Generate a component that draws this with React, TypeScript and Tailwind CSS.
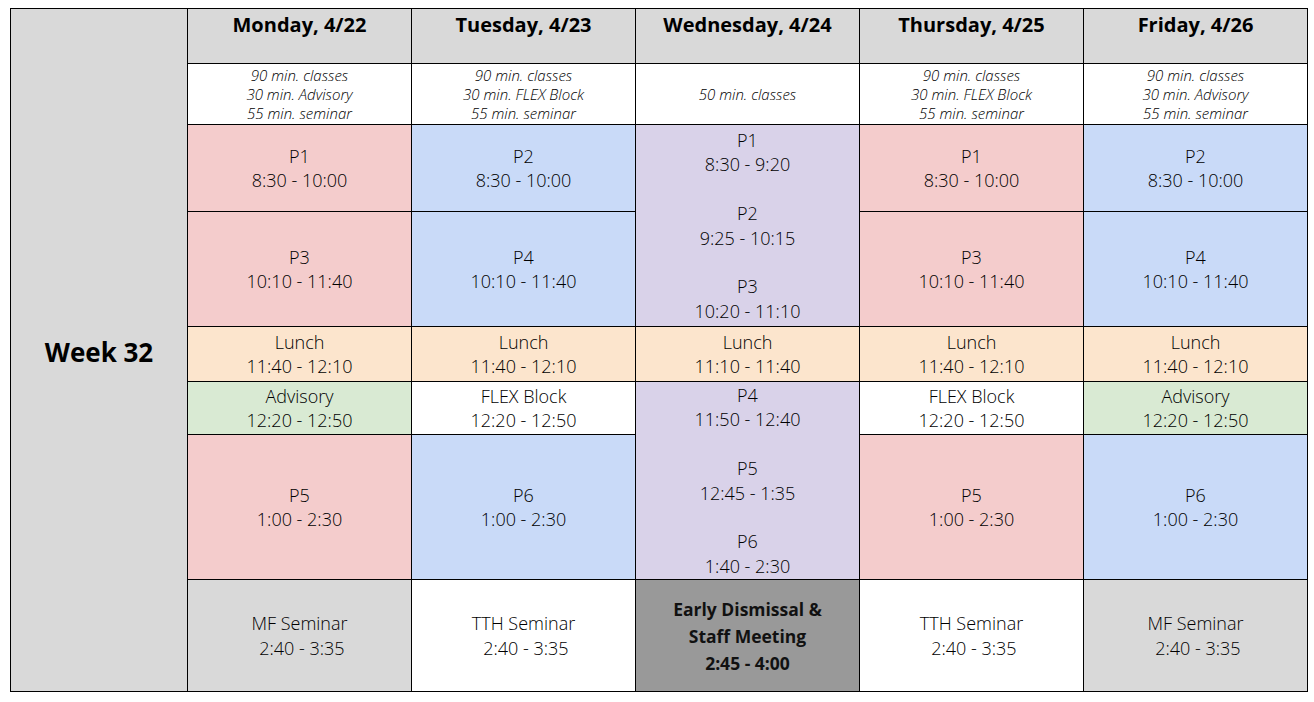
import React from 'react';

type Cell = {
  lines: string[];
  bg: string;
  span?: boolean;
  bold?: boolean;
};

const days = ['Monday, 4/22', 'Tuesday, 4/23', 'Wednesday, 4/24', 'Thursday, 4/25', 'Friday, 4/26'];

const notes: string[][] = [
  ['90 min. classes', '30 min. Advisory', '55 min. seminar'],
  ['90 min. classes', '30 min. FLEX Block', '55 min. seminar'],
  ['50 min. classes'],
  ['90 min. classes', '30 min. FLEX Block', '55 min. seminar'],
  ['90 min. classes', '30 min. Advisory', '55 min. seminar'],
];

const pink = 'bg-[#f4cccc]';
const blue = 'bg-[#c9daf8]';
const purple = 'bg-[#d9d2e9]';
const lunch = 'bg-[#fce5cd]';
const green = 'bg-[#d9ead3]';
const white = 'bg-white';
const gray = 'bg-[#d9d9d9]';

// rows after the notes line; wednesday's merged cells only show up once
const rows: Cell[][] = [
  [
    { lines: ['P1', '8:30 - 10:00'], bg: pink },
    { lines: ['P2', '8:30 - 10:00'], bg: blue },
    { lines: ['P1', '8:30 - 9:20', '', 'P2', '9:25 - 10:15', '', 'P3', '10:20 - 11:10'], bg: purple, span: true },
    { lines: ['P1', '8:30 - 10:00'], bg: pink },
    { lines: ['P2', '8:30 - 10:00'], bg: blue },
  ],
  [
    { lines: ['P3', '10:10 - 11:40'], bg: pink },
    { lines: ['P4', '10:10 - 11:40'], bg: blue },
    { lines: ['P3', '10:10 - 11:40'], bg: pink },
    { lines: ['P4', '10:10 - 11:40'], bg: blue },
  ],
  [
    { lines: ['Lunch', '11:40 - 12:10'], bg: lunch },
    { lines: ['Lunch', '11:40 - 12:10'], bg: lunch },
    { lines: ['Lunch', '11:10 - 11:40'], bg: lunch },
    { lines: ['Lunch', '11:40 - 12:10'], bg: lunch },
    { lines: ['Lunch', '11:40 - 12:10'], bg: lunch },
  ],
  [
    { lines: ['Advisory', '12:20 - 12:50'], bg: green },
    { lines: ['FLEX Block', '12:20 - 12:50'], bg: white },
    { lines: ['P4', '11:50 - 12:40', '', 'P5', '12:45 - 1:35', '', 'P6', '1:40 - 2:30'], bg: purple, span: true },
    { lines: ['FLEX Block', '12:20 - 12:50'], bg: white },
    { lines: ['Advisory', '12:20 - 12:50'], bg: green },
  ],
  [
    { lines: ['P5', '1:00 - 2:30'], bg: pink },
    { lines: ['P6', '1:00 - 2:30'], bg: blue },
    { lines: ['P5', '1:00 - 2:30'], bg: pink },
    { lines: ['P6', '1:00 - 2:30'], bg: blue },
  ],
  [
    { lines: ['MF Seminar', ' 2:40 - 3:35'], bg: gray },
    { lines: ['TTH Seminar', ' 2:40 - 3:35'], bg: white },
    { lines: ['Early Dismissal &', 'Staff Meeting', '2:45 - 4:00'], bg: 'bg-[#999999]', bold: true },
    { lines: ['TTH Seminar', ' 2:40 - 3:35'], bg: white },
    { lines: ['MF Seminar', ' 2:40 - 3:35'], bg: gray },
  ],
];

function ScheduleCell({ cell }: { cell: Cell }) {
  return (
    <div
      className={`${cell.bg} ${cell.span ? 'row-span-2' : ''} flex flex-col items-center justify-center text-center ${
        cell.bold
          ? 'font-bold text-[17.5px] leading-[27px] text-[#111] pt-[1px]'
          : 'font-light text-[18px] leading-[24.4px] text-black'
      }`}
    >
      {cell.lines.map((l, i) => (
        <div key={i} className="whitespace-pre">
          {l === '' ? '\u00a0' : l}
        </div>
      ))}
    </div>
  );
}

export default function App() {
  return (
    <div className="w-[1314px] h-[702px] bg-white pt-[8px] pl-[10px]" style={{ fontFamily: '"Open Sans", "Noto Sans", sans-serif' }}>
      <div className="inline-grid gap-px bg-black p-px grid-cols-[176px_223px_223px_223px_223px_223px] grid-rows-[54px_60px_86px_114px_54px_52px_144px_111px]">
        {/* week label */}
        <div className="row-span-8 bg-[#d9d9d9] flex items-center justify-center pt-[4px] text-[26px] font-bold text-black">
          Week 32
        </div>

        {days.map(d => (
          <div key={d} className="bg-[#d9d9d9] flex justify-center pt-[1px] text-[20px] font-bold text-black">
            {d}
          </div>
        ))}

        {notes.map((n, i) => (
          <div key={i} className="bg-white flex flex-col items-center justify-center text-[15px] leading-[19px] font-light italic text-black">
            {n.map((l, j) => (
              <div key={j}>{l}</div>
            ))}
          </div>
        ))}

        {rows.map((r, ri) => r.map((c, ci) => <ScheduleCell key={`${ri}-${ci}`} cell={c} />))}
      </div>
    </div>
  );
}
